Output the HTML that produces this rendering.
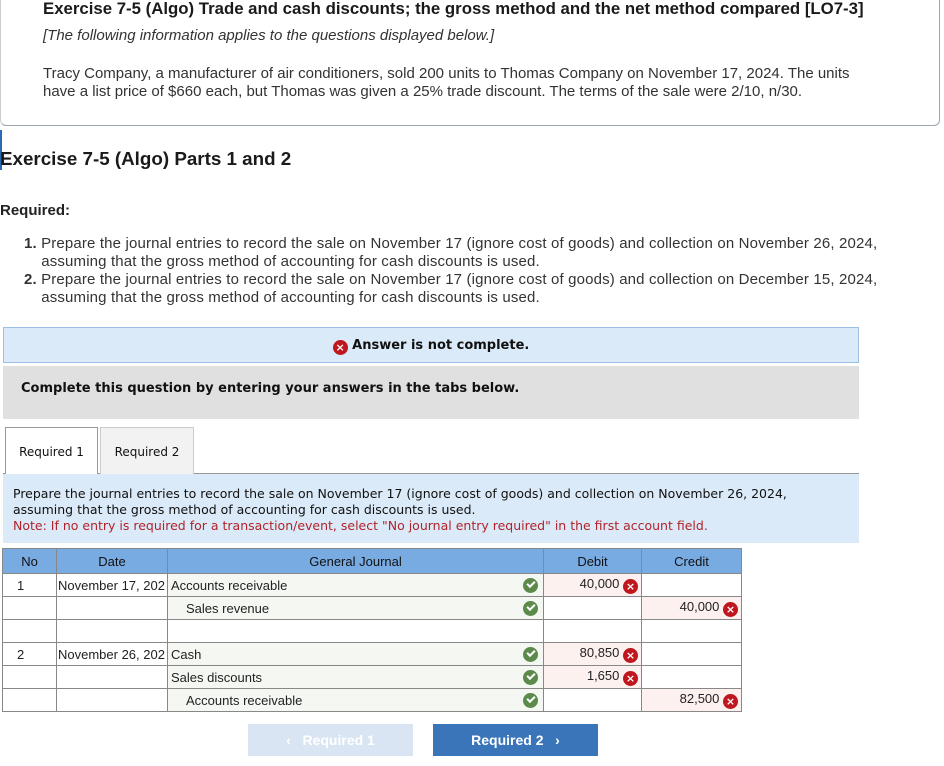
<!DOCTYPE html>
<html><head><meta charset="utf-8"><style>
body{margin:0;width:944px;height:766px;background:#fff;font-family:"Liberation Sans",Arial,sans-serif;color:#222;position:relative;overflow:hidden}
.abs{position:absolute}
.topbox{left:0;top:-10px;width:938px;height:135px;border:1px solid #9aa6b2;border-radius:0 0 6px 6px;border-top:none;border-left:1px solid #ccc}
h1{margin:0;font-size:16.8px;font-weight:bold;color:#1a1a1a;white-space:nowrap}
.x{display:inline-block;width:15px;height:15px;border-radius:50%;background:#c0161d;color:#fff;font-size:11px;line-height:15px;text-align:center;font-weight:bold;vertical-align:-2px;font-family:"DejaVu Sans",sans-serif}
.ck{display:inline-block;width:15px;height:15px;border-radius:50%;background:#5b8a4b;position:absolute;right:5px;top:4px}
.ck:after{content:"";position:absolute;left:4px;top:3px;width:6px;height:3px;border-left:2px solid #fff;border-bottom:2px solid #fff;transform:rotate(-45deg)}
table{border-collapse:collapse;font-size:13px;font-family:"Liberation Sans",Arial,sans-serif;table-layout:fixed}
td,th{border:1px solid #888;height:22px;padding:0 3px;position:relative;white-space:nowrap;overflow:hidden}
th{background:#79abe3;font-weight:normal;color:#111;font-size:13px}
.v{font-family:"DejaVu Sans",Verdana,sans-serif}
</style></head><body>
<div class="abs topbox"></div>
<div class="abs" style="left:43px;top:-1px"><h1>Exercise 7-5 (Algo) Trade and cash discounts; the gross method and the net method compared [LO7-3]</h1></div>
<div class="abs" style="left:43px;top:27px;font-size:15px;font-style:italic;color:#333">[The following information applies to the questions displayed below.]</div>
<div class="abs" style="left:43px;top:65px;font-size:15px;line-height:18px;color:#333;width:830px">Tracy Company, a manufacturer of air conditioners, sold 200 units to Thomas Company on November 17, 2024. The units have a list price of $660 each, but Thomas was given a 25% trade discount. The terms of the sale were 2/10, n/30.</div>
<div class="abs" style="left:0;top:130px;width:2px;height:40px;background:#2a6bb5"></div>
<div class="abs" style="left:0;top:148px"><h1 style="font-size:18.8px">Exercise 7-5 (Algo) Parts 1 and 2</h1></div>
<div class="abs" style="left:0;top:202px;font-size:15px;font-weight:bold">Required:</div>
<div class="abs" style="left:24px;top:235px;font-size:15px;line-height:18px;color:#333;width:910px;letter-spacing:0.15px">
<div><b>1.</b> Prepare the journal entries to record the sale on November 17 (ignore cost of goods) and collection on November 26, 2024,<br>&nbsp;&nbsp;&nbsp;&nbsp;assuming that the gross method of accounting for cash discounts is used.</div>
<div><b>2.</b> Prepare the journal entries to record the sale on November 17 (ignore cost of goods) and collection on December 15, 2024,<br>&nbsp;&nbsp;&nbsp;&nbsp;assuming that the gross method of accounting for cash discounts is used.</div></div>
<div class="abs v" style="left:3px;top:327px;width:854px;height:34px;background:#dbeaf8;border:1px solid #9cc0e6;text-align:center;line-height:36px;font-size:13px;font-weight:bold;color:#111"><span class="x">×</span> Answer is not complete.</div>
<div class="abs v" style="left:3px;top:366px;width:856px;height:53px;background:#e0e0e0;font-size:13px;font-weight:bold;line-height:46px;text-indent:18px;color:#111">Complete this question by entering your answers in the tabs below.</div>
<div class="abs" style="left:3px;top:473px;width:856px;height:1px;background:#999"></div>
<div class="abs v" style="left:5px;top:427px;width:91px;height:47px;border:1px solid #999;border-bottom:1px solid #fff;background:#fff;font-size:12px;line-height:48px;text-align:center;color:#111">Required 1</div>
<div class="abs v" style="left:100px;top:427px;width:92px;height:46px;border:1px solid #ccc;background:#f2f2f2;font-size:12px;line-height:48px;text-align:center;color:#111">Required 2</div>
<div class="abs v" style="left:3px;top:474px;width:856px;height:69px;background:#dbeaf8"></div>
<div class="abs v" style="left:13px;top:486px;font-size:12.5px;line-height:16px;color:#111;width:818px">Prepare the journal entries to record the sale on November 17 (ignore cost of goods) and collection on November 26, 2024, assuming that the gross method of accounting for cash discounts is used.<br><span style="color:#b0242a">Note: If no entry is required for a transaction/event, select "No journal entry required" in the first account field.</span></div>
<table class="abs" style="left:2px;top:548px;width:739px">
<colgroup><col style="width:54px"><col style="width:111px"><col style="width:376px"><col style="width:98px"><col style="width:100px"></colgroup>
<tr style="height:25px"><th>No</th><th>Date</th><th>General Journal</th><th>Debit</th><th>Credit</th></tr>
<tr><td style="padding-left:14px">1</td><td style="padding:0 1px">November 17, 202</td><td style="background:#f5f8f2">Accounts receivable<span class="ck"></span></td><td style="background:#fdf1f0;text-align:right">40,000 <span class="x">×</span></td><td></td></tr>
<tr><td></td><td></td><td style="background:#f5f8f2;padding-left:18px">Sales revenue<span class="ck"></span></td><td></td><td style="background:#fdf1f0;text-align:right">40,000 <span class="x">×</span></td></tr>
<tr><td></td><td></td><td></td><td></td><td></td></tr>
<tr><td style="padding-left:14px">2</td><td style="padding:0 1px">November 26, 202</td><td style="background:#f5f8f2">Cash<span class="ck"></span></td><td style="background:#fdf1f0;text-align:right">80,850 <span class="x">×</span></td><td></td></tr>
<tr><td></td><td></td><td style="background:#f5f8f2">Sales discounts<span class="ck"></span></td><td style="background:#fdf1f0;text-align:right">1,650 <span class="x">×</span></td><td></td></tr>
<tr><td></td><td></td><td style="background:#f5f8f2;padding-left:18px">Accounts receivable<span class="ck"></span></td><td></td><td style="background:#fdf1f0;text-align:right">82,500 <span class="x">×</span></td></tr>
</table>
<div class="abs" style="left:248px;top:724px;width:165px;height:32px;background:#d9e5f2;color:#fff;font-weight:bold;font-size:14px;line-height:32px;text-align:center">‹&nbsp;&nbsp; Required 1</div>
<div class="abs" style="left:433px;top:724px;width:165px;height:32px;background:#3a75ba;color:#fff;font-weight:bold;font-size:14px;line-height:32px;text-align:center">Required 2 &nbsp;&nbsp;›</div>
</body></html>
